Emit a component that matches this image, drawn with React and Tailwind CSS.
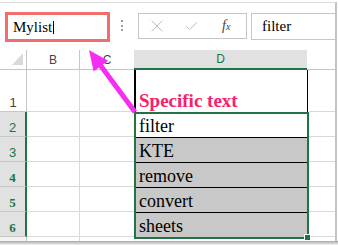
import { X, Check } from "lucide-react";

const serif = "font-['Liberation_Serif',serif]";
const sans = "font-['Liberation_Sans',Arial,sans-serif]";

const items = ["KTE", "remove", "convert", "sheets"];

function TopBar() {
  return (
    <div className="flex items-start h-[47px] pt-[9px]">
      <div className="ml-[5px] w-[105px] h-[30px] border-[3px] border-[#f26d6d] flex items-center pl-[5px]">
        <span className={`${serif} text-[15px] leading-none text-black`}>Mylist</span>
        <span className="w-px h-[13px] bg-black ml-px" />
      </div>
      <div className="ml-[11px] mt-[8px] flex flex-col gap-[2.5px]">
        <span className="w-[2px] h-[2px] bg-[#9c9c9c]" />
        <span className="w-[2px] h-[2px] bg-[#9c9c9c]" />
        <span className="w-[2px] h-[2px] bg-[#9c9c9c]" />
      </div>
      <div className="ml-[15px] mt-px w-[109px] h-[26px] border border-[#c6c6c6] flex items-center">
        <X size={20} strokeWidth={1.2} className="ml-[8px] text-[#bdbdbd]" />
        <Check size={15} strokeWidth={1.6} className="ml-[17px] text-[#bdbdbd]" />
        <span className={`${serif} ml-[23px] italic text-[14px] leading-none text-[#444]`}>
          f<span className="text-[10px]">x</span>
        </span>
      </div>
      <div className="ml-[4px] mt-px flex-1 h-[27px] border-y border-l border-[#c6c6c6] flex items-center pl-[10px]">
        <span className={`${serif} text-[15px] leading-none text-black`}>filter</span>
      </div>
    </div>
  );
}

function Sheet() {
  return (
    <div className={`${sans} grid grid-cols-[27px_53px_54px_175px_26px] grid-rows-[20px_42px_25px_25px_25px_25px_25px_4px]`}>
      {/* column headers */}
      <div className="relative border-r border-b border-[#c6c6c6]">
        <svg width="26" height="19" className="absolute left-0 top-0">
          <polygon points="12,15 23,3 23,15" fill="#dadada" />
        </svg>
      </div>
      <div className="border-r border-b border-[#c6c6c6] flex items-center justify-center text-[12px] leading-none text-[#444]">B</div>
      <div className="border-b border-[#c6c6c6] flex items-center justify-center text-[12px] leading-none text-[#444]">C</div>
      <div className="flex">
        <div className="w-[173px] bg-[#e1e1e1] border-b-2 border-[#217346] flex items-center justify-center text-[12px] leading-none text-[#217346]">D</div>
        <div className="flex-1 border-b border-[#c6c6c6]" />
      </div>
      <div className="border-b border-[#c6c6c6]" />

      {/* row 1 */}
      <div className="border-r border-b border-[#c6c6c6] flex items-end justify-center pb-[2px] text-[13px] leading-[13px] text-[#444]">1</div>
      <div className="border-r border-b border-[#d9d9d9]" />
      <div className="border-b border-[#d9d9d9]" />
      <div className="flex">
        <div className={`${serif} w-[174px] border-l-2 border-r border-black flex items-end pl-[3px] pb-[2px] text-[19px] leading-[19px] font-bold text-[#f5216c]`}>
          Specific text
        </div>
      </div>
      <div className="border-b border-[#d9d9d9]" />

      {/* rows 2-6 */}
      {[2, 3, 4, 5, 6].map((n) => (
        <div key={n} className="contents">
          <div
            className={`bg-[#e1e1e1] border-r-2 border-r-[#217346] border-b border-b-[#c6c6c6] flex items-end justify-center pb-[2px] text-[13px] leading-[13px] text-[#217346] ${n > 3 ? "font-['Liberation_Serif',serif] font-bold" : ""}`}
          >
            {n}
          </div>
          <div className="border-r border-b border-[#d9d9d9]" />
          <div className="border-b border-[#d9d9d9]" />
          {n === 2 ? (
            <div className="relative z-10 col-start-4 row-span-5 self-start h-[127px] border-2 border-[#217346] flex flex-col">
              <div className={`${serif} h-[24px] bg-white border-b border-black flex items-end pl-[3px] pb-[2px] text-[18px] leading-[18px] text-black`}>
                filter
              </div>
              {items.map((t, i) => (
                <div
                  key={t}
                  className={`${serif} bg-[#c8c8c8] flex items-end pl-[3px] pb-[2px] text-[18px] leading-[18px] text-black ${i < 3 ? "h-[25px] border-b border-black" : "h-[24px]"}`}
                >
                  {t}
                </div>
              ))}
              <div className="absolute -right-[4px] -bottom-[4px] w-[7px] h-[7px] bg-[#217346] border border-white" />
            </div>
          ) : null}
          <div className="col-start-5 border-b border-[#d9d9d9]" />
        </div>
      ))}

      {/* strip below row 6 */}
      <div className="border-r border-[#c6c6c6] bg-[#f3f3f3]" />
      <div className="border-r border-[#d9d9d9]" />
      <div />
      <div />
      <div />
    </div>
  );
}

export default function App() {
  return (
    <div className="relative w-[338px] h-[245px] bg-white overflow-hidden">
      <div className="mt-[2px] w-[337px] border-t border-t-[#dcdcdc] border-r-2 border-r-[#c2c2c2]">
        <TopBar />
        <Sheet />
      </div>
      <div className="h-[4px] bg-linear-to-b from-[#a8a8a8] to-[#f2f2f2]" />
      <svg width="338" height="245" className="absolute left-0 top-0 z-20 pointer-events-none">
        <polygon
          points="89,50 108.1,60.7 102.9,64.6 137,110.5 133,113.5 98.9,67.6 93.7,71.5"
          fill="#f52ef0"
        />
      </svg>
    </div>
  );
}
